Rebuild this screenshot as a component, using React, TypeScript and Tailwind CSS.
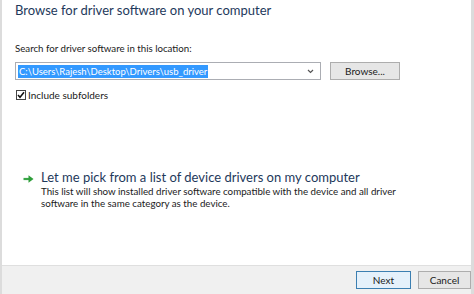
export default function App() {
  return (
    <div
      className="flex h-[294px] w-[474px] flex-col overflow-hidden border-l-[2px] border-r-[3px] border-[#dcdcdc] bg-white text-[#1a1a1a]"
      style={{ fontFamily: '"Segoe UI", Lato, sans-serif' }}
    >
      <div className="flex-1 pl-[13px]">
        <h1 className="mt-[2px] text-[13px] leading-[16px] text-[#1e395b]">
          Browse for driver software on your computer
        </h1>

        <div className="mt-[24px] text-[9.7px] leading-[12px]">Search for driver software in this location:</div>

        <div className="mt-[8px] flex items-center gap-[9px]">
          <div className="flex h-[18px] w-[306px] items-center border border-[#abadb3] pl-[2px] pr-[6px]">
            <span className="bg-[#3399ff] px-[1px] text-[9.5px] leading-[13px] text-white">
              C:\Users\Rajesh\Desktop\Drivers\usb_driver
            </span>
            <svg className="ml-auto" width="7" height="5" viewBox="0 0 7 5">
              <path d="M1 1 L3.5 3.5 L6 1" fill="none" stroke="#555" strokeWidth="1.2" />
            </svg>
          </div>
          <button className="h-[18px] w-[70px] border border-[#adadad] bg-[#e6e6e6] text-[10px] leading-[12px]">
            Browse...
          </button>
        </div>

        <label className="mt-[9px] flex h-[12px] items-center gap-[2px] text-[10px] leading-[12px]">
          <span className="ml-[1px] flex h-[10px] w-[10px] items-center justify-center border border-[#444] bg-white">
            <svg width="8" height="8" viewBox="0 0 8 8">
              <path d="M1 4 L3 6.3 L7 1.2" fill="none" stroke="#111" strokeWidth="1.5" />
            </svg>
          </span>
          Include subfolders
        </label>

        <div className="mt-[69px] flex gap-[7px] pl-[8px]">
          <svg className="mt-[5px] shrink-0" width="11" height="8" viewBox="0 0 11 8">
            <path d="M0.5 4 H8.5" fill="none" stroke="#3aa648" strokeWidth="2.2" />
            <path d="M5.5 0.3 L10.5 4 L5.5 7.7 Z" fill="#2e9e3a" />
          </svg>
          <div>
            <div className="text-[13px] leading-[15px] text-[#1e395b]">
              Let me pick from a list of device drivers on my computer
            </div>
            <div className="w-[362px] text-[9.75px] leading-[12px]">
              This list will show installed driver software compatible with the device and all driver software in the same category as the device.
            </div>
          </div>
        </div>
      </div>

      <div className="flex h-[29px] items-center justify-end gap-[7px] border-t border-[#dfdfdf] bg-[#f0f0f0]">
        <button className="h-[18px] w-[55px] border border-[#3c7fb1] bg-[#e5f1fb] text-[10px] leading-[12px]">
          Next
        </button>
        <button className="h-[18px] w-[53px] border border-[#adadad] bg-[#e6e6e6] text-[10px] leading-[12px]">
          Cancel
        </button>
      </div>
    </div>
  );
}
